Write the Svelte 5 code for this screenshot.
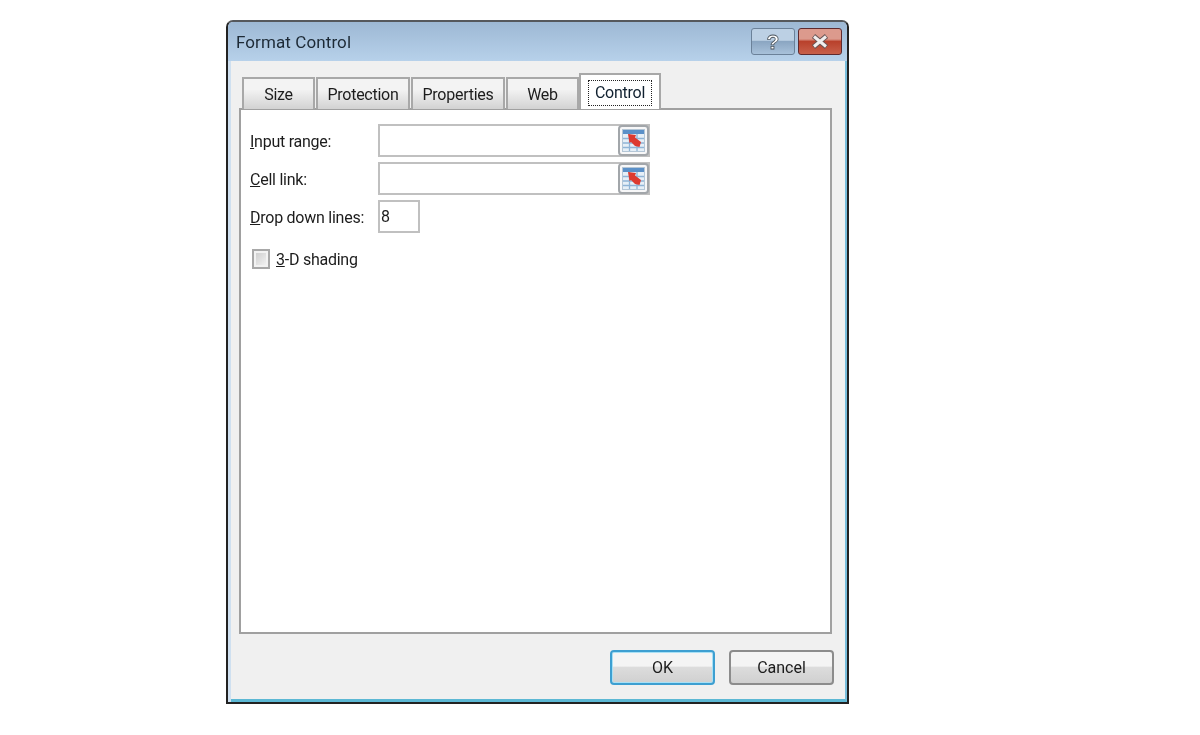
<script>
  let tabs = ["Size", "Protection", "Properties", "Web", "Control"];
  let active = "Control";
</script>

<div class="page">
  <div class="window">
    <div class="titlebar">
      <span class="title">Format Control</span>
      <div class="winbtns">
        <button class="help">?</button>
        <button class="close" aria-label="Close">
          <svg width="20" height="15" viewBox="0 0 20 15">
            <path d="M3.5 2 L16.5 13 M16.5 2 L3.5 13" stroke="#6a5555" stroke-width="5" fill="none"/>
            <path d="M4 2.5 L16 12.5 M16 2.5 L4 12.5" stroke="#f1eeee" stroke-width="3" fill="none"/>
          </svg>
        </button>
      </div>
    </div>

    <div class="content">
      <div class="tabs">
        {#each tabs as tab}
          <div class="tab {tab.toLowerCase()}" class:active={tab === active}>
            {#if tab === active}
              <span class="focus">{tab}</span>
            {:else}
              {tab}
            {/if}
          </div>
        {/each}
      </div>

      <div class="panel">
        <div class="row">
          <label for="range"><u>I</u>nput range:</label>
          <div class="field">
            <input id="range" type="text" />
            <button class="picker" aria-label="Select range">
              {@render rangeIcon()}
            </button>
          </div>
        </div>
        <div class="row">
          <label for="link"><u>C</u>ell link:</label>
          <div class="field">
            <input id="link" type="text" />
            <button class="picker" aria-label="Select cell">
              {@render rangeIcon()}
            </button>
          </div>
        </div>
        <div class="row">
          <label for="lines"><u>D</u>rop down lines:</label>
          <input id="lines" class="small" type="text" value="8" />
        </div>
        <div class="check">
          <span class="box"><span class="inner"></span></span>
          <span><u>3</u>-D shading</span>
        </div>
      </div>

      <div class="actions">
        <button class="btn default">OK</button>
        <button class="btn">Cancel</button>
      </div>
    </div>
  </div>
</div>

{#snippet rangeIcon()}
  <svg width="23" height="23" viewBox="0 0 23 23">
    <rect x="0.5" y="0.5" width="22" height="22" fill="#e6eff7" stroke="#b4c6d6" />
    <rect x="1" y="1" width="21" height="4" fill="#5b90c8" />
    <path d="M1 9.5H22M1 14H22M1 18.5H22M7.5 5V22M15 5V22" stroke="#8fb4d6" stroke-width="1.3" fill="none" />
    <path d="M6 5 L14 6 L13 8.5 L19 13 L17.5 18 L13 17 L9 13 L7.5 14 Z" fill="#dd3a30" />
  </svg>
{/snippet}

<style>
  :global(body) {
    margin: 0;
    background: #fff;
  }
  .page {
    height: 735px;
    padding: 20px 0 0 226px;
    box-sizing: border-box;
    font-family: Roboto, "Open Sans", sans-serif;
    font-size: 16px;
    letter-spacing: -0.25px;
    color: #1c1c1c;
  }
  .window {
    width: 623px;
    height: 684px;
    box-sizing: border-box;
    border: 2px solid #222;
    border-top-color: #55585c;
    border-radius: 7px 7px 0 0;
    background: #cfe0f0;
    display: flex;
    flex-direction: column;
    filter: blur(0.5px);
  }
  .titlebar {
    height: 39px;
    flex: none;
    display: flex;
    align-items: center;
    justify-content: space-between;
    padding: 0 5px 0 8px;
    background: linear-gradient(#9db8d4, #b7d1ea);
    border-radius: 5px 5px 0 0;
  }
  .title {
    font-size: 17px;
    letter-spacing: 0.1px;
    color: #1d2a36;
    margin-top: 1px;
  }
  .winbtns {
    display: flex;
    gap: 3px;
    align-items: flex-start;
    margin-top: 0;
  }
  .winbtns button {
    width: 44px;
    height: 27px;
    padding: 0;
    box-sizing: border-box;
    border-radius: 3px;
    display: flex;
    align-items: center;
    justify-content: center;
  }
  .help {
    border: 1px solid #6b8199;
    background: linear-gradient(#bcd0e4 0 45%, #8ba6c2 50%, #a8c1da);
    color: #fff;
    font-family: "Liberation Sans", sans-serif;
    font-size: 21px;
    font-weight: bold;
    -webkit-text-stroke: 0.8px #4a535c;
  }
  .close {
    border: 1px solid #5f2a2e;
    background: linear-gradient(#dc9a8d 0 40%, #b9412c 50%, #c8604a);
  }
  .content {
    flex: 1;
    margin-left: 3px;
    background: #f0f0f0;
    padding: 12px 13px 0 8px;
    display: flex;
    flex-direction: column;
    border-right: 2px solid #78bedc;
    border-bottom: 3px solid #5cb8d4;
  }
  .tabs {
    display: flex;
    align-items: flex-end;
    height: 36px;
    padding-left: 3px;
    margin-bottom: -1px;
    position: relative;
    z-index: 1;
  }
  .tab {
    height: 32px;
    box-sizing: border-box;
    margin-right: 1px;
    border: 2px solid #a8a8a8;
    border-bottom: none;
    background: linear-gradient(#f3f3f3 0 35%, #d2d2d2);
    display: flex;
    align-items: center;
    justify-content: center;
  }
  .size { width: 73px; }
  .protection { width: 94px; }
  .properties { width: 94px; }
  .web { width: 73px; margin-right: 0; }
  .control { width: 82px; }
  .tab.active {
    height: 36px;
    background: #fff;
  }
  .focus {
    border: 1px dotted #222;
    padding: 0 6px;
    line-height: 24px;
    margin-top: 2px;
    color: #10202f;
  }
  .panel {
    height: 526px;
    flex: none;
    box-sizing: border-box;
    border: 2px solid #a0a0a0;
    background: #fff;
    padding: 14px 0 0 9px;
  }
  .row {
    display: flex;
    align-items: center;
    height: 33px;
    margin-bottom: 5px;
  }
  label {
    width: 128px;
    flex: none;
    padding-top: 1px;
  }
  input {
    font: inherit;
    color: inherit;
    box-sizing: border-box;
    height: 33px;
    border: 2px solid #c0c0c0;
    border-radius: 0;
    background: #fff;
    padding: 0 1px;
    outline: none;
  }
  .field {
    position: relative;
    width: 272px;
  }
  .field input {
    width: 100%;
    display: block;
  }
  .small {
    width: 42px;
  }
  .picker {
    position: absolute;
    right: 1px;
    top: 1px;
    width: 31px;
    height: 31px;
    padding: 0;
    box-sizing: border-box;
    border: 2px solid #a2a6aa;
    border-radius: 4px;
    background: #f7f7f8;
    display: flex;
    align-items: center;
    justify-content: center;
  }
  .check {
    display: flex;
    align-items: center;
    gap: 6px;
    margin: 16px 0 0 2px;
    height: 20px;
  }
  .box {
    width: 18px;
    height: 20px;
    box-sizing: border-box;
    border: 2px solid #a8a8a8;
    background: #f2f2f2;
    padding: 2px;
    display: block;
  }
  .inner {
    display: block;
    height: 100%;
    background: linear-gradient(135deg, #cfcfcf, #f1f1f1);
  }
  .actions {
    display: flex;
    justify-content: flex-end;
    gap: 14px;
    margin-top: 16px;
    margin-right: -2px;
  }
  .btn {
    width: 105px;
    height: 35px;
    box-sizing: border-box;
    font: inherit;
    color: inherit;
    border: 2px solid #8c8c8c;
    border-radius: 4px;
    background: linear-gradient(#f4f4f4 0 45%, #dcdcdc 50%, #d0d0d0);
  }
  .btn.default {
    border-color: #3d9fd1;
    box-shadow: inset 0 0 0 1px #a8e0f5;
  }
</style>
